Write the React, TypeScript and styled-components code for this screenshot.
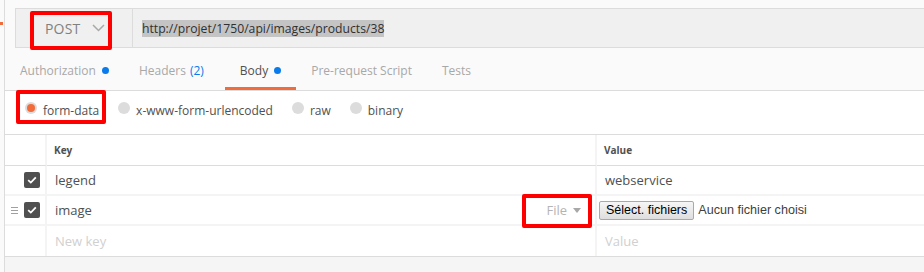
import React from "react";
import styled, { createGlobalStyle } from "styled-components";

const Global = createGlobalStyle`
  html, body { margin: 0; padding: 0; background: #fafafa; }
  body { font-family: "Open Sans", "Liberation Sans", sans-serif; }
  * { box-sizing: border-box; }
`;

const Page = styled.div`
  display: flex;
  width: 924px;
  height: 272px;
  overflow: hidden;
  background: #fafafa;
`;

const SideStrip = styled.div`
  width: 5px;
  flex: none;
  border-right: 1px solid #dcdcdc;
  background: #fafafa;
  padding-top: 22px;
`;

const SideMark = styled.div`
  width: 3px;
  height: 3px;
  background: #f26b3a;
`;

const Main = styled.div`
  flex: 1;
  display: flex;
  flex-direction: column;
  min-width: 0;
`;

const UrlArea = styled.div`
  padding: 8px 0 0 10px;
  background: #fafafa;
`;

const UrlBar = styled.div`
  display: flex;
  height: 40px;
  border: 1px solid #dcdcdc;
  border-right: none;
  background: #f0f0f0;
`;

const Method = styled.div`
  position: relative;
  width: 117px;
  flex: none;
  border-right: 1px solid #dcdcdc;
  display: flex;
  align-items: center;
  padding-left: 29px;
  gap: 11px;
  font-size: 14px;
  color: #808080;
  letter-spacing: 0.2px;
`;

const Url = styled.div`
  display: flex;
  align-items: center;
  padding-left: 9px;
  font-size: 12.2px;
  color: #303030;
`;

const Selected = styled.span`
  background: #c4c4c4;
  line-height: 17px;
`;

const Annot = styled.div<{ $l: number; $t: number; $w: number; $h: number }>`
  position: absolute;
  left: ${(p) => p.$l}px;
  top: ${(p) => p.$t}px;
  width: ${(p) => p.$w}px;
  height: ${(p) => p.$h}px;
  border: 4px solid #fe0000;
  border-radius: 2px;
  pointer-events: none;
`;

const Tabs = styled.div`
  display: flex;
  height: 43px;
  border-bottom: 1px solid #dcdcdc;
  background: #fafafa;
`;

const Tab = styled.div<{ $active?: boolean }>`
  display: flex;
  align-items: center;
  padding: 6px 15px 0;
  font-size: 12px;
  color: ${(p) => (p.$active ? "#505050" : "#a8a8a8")};
  border-bottom: 3px solid ${(p) => (p.$active ? "#f26b3a" : "transparent")};
`;

const Dot = styled.span`
  width: 7px;
  height: 7px;
  border-radius: 50%;
  background: #097bed;
  margin-left: 6px;
`;

const Count = styled.span`
  color: #097bed;
  margin-left: 4px;
  margin-right: 6px;
`;

const RadioRow = styled.div`
  display: flex;
  align-items: center;
  height: 43px;
  background: #fff;
  padding-left: 20px;
  padding-bottom: 4px;
  gap: 19px;
`;

const RadioItem = styled.label`
  position: relative;
  display: flex;
  align-items: center;
  gap: 6px;
  font-size: 12px;
  color: #505050;
`;

const RadioCircle = styled.span<{ $on?: boolean }>`
  width: 12px;
  height: 12px;
  border-radius: 50%;
  background: #dcdcdc;
  display: flex;
  align-items: center;
  justify-content: center;
  margin-top: -6px;
  &::after {
    content: "";
    width: 8px;
    height: 8px;
    border-radius: 50%;
    background: ${(p) => (p.$on ? "#f26b3a" : "transparent")};
  }
`;

const Table = styled.div`
  display: grid;
  grid-template-columns: 42px 550px 1fr;
  background: #fff;
  border-top: 1px solid #dcdcdc;
  border-bottom: 1px solid #dcdcdc;
`;

const HeadCell = styled.div<{ $right?: boolean }>`
  height: 31px;
  display: flex;
  align-items: center;
  padding-left: 7px;
  font-size: 10px;
  font-weight: 700;
  color: #505050;
  border-bottom: 1px solid #dcdcdc;
  border-right: ${(p) => (p.$right ? "none" : "2px solid #f4f4f4")};
`;

const Cell = styled.div<{ $last?: boolean; $right?: boolean }>`
  position: relative;
  height: 30px;
  display: flex;
  align-items: center;
  padding-left: 8px;
  font-size: 13px;
  color: #505050;
  border-bottom: ${(p) => (p.$last ? "none" : "2px solid #f4f4f4")};
  border-right: ${(p) => (p.$right ? "none" : "2px solid #f4f4f4")};
`;

const CheckCell = styled(Cell)`
  padding-left: 0;
  justify-content: flex-end;
  padding-right: 5px;
  gap: 6px;
`;

const Check = styled.span`
  width: 16px;
  height: 16px;
  border-radius: 2px;
  background: #505050;
  display: flex;
  align-items: center;
  justify-content: center;
`;

const Handle = styled.span`
  width: 7px;
  display: flex;
  flex-direction: column;
  gap: 2px;
  & > i { display: block; height: 1px; background: #a0a0a0; }
`;

const Placeholder = styled.span`
  color: #d0d0d0;
`;

const KeyRow = styled.div`
  flex: 1;
  display: flex;
  align-items: center;
  justify-content: space-between;
  padding-right: 14px;
`;

const TypeSelect = styled.span`
  display: flex;
  align-items: center;
  gap: 6px;
  color: #b4b4b4;
  font-size: 13px;
`;

const FileButton = styled.button`
  font-family: "Liberation Sans", Arial, sans-serif;
  font-size: 12.5px;
  color: #000;
  height: 19px;
  padding: 0 6px;
  margin-left: -6px;
  border: 1px solid #a9a9a9;
  border-radius: 2px;
  background: linear-gradient(#f6f6f6, #dedede);
`;

const FileText = styled.span`
  font-family: "Liberation Sans", Arial, sans-serif;
  font-size: 12.6px;
  color: #404040;
  margin-left: 4px;
`;

const Bottom = styled.div`
  flex: 1;
  background: #f5f5f5;
`;

const CheckIcon = () => (
  <svg width="10" height="8" viewBox="0 0 10 8">
    <path d="M1.2 4.2 L3.8 6.6 L8.8 1.4" fill="none" stroke="#fff" strokeWidth="1.8" />
  </svg>
);

export default function App() {
  return (
    <>
      <Global />
      <Page>
        <SideStrip>
          <SideMark />
        </SideStrip>
        <Main>
          <UrlArea>
            <UrlBar>
              <Method>
                POST
                <svg width="13" height="8" viewBox="0 0 13 8">
                  <path d="M1 1 L6.5 6.5 L12 1" fill="none" stroke="#a8a8a8" strokeWidth="1.5" />
                </svg>
                <Annot $l={14} $t={2} $w={82} $h={39} />
              </Method>
              <Url>
                <Selected>http://projet/1750/api/images/products/38</Selected>
              </Url>
            </UrlBar>
          </UrlArea>
          <Tabs>
            <Tab>
              Authorization<Dot />
            </Tab>
            <Tab>
              Headers<Count>(2)</Count>
            </Tab>
            <Tab $active>
              Body<Dot />
            </Tab>
            <Tab>Pre-request Script</Tab>
            <Tab>Tests</Tab>
          </Tabs>
          <RadioRow>
            <RadioItem>
              <RadioCircle $on />
              form-data
              <Annot $l={-9} $t={-12} $w={90} $h={34} />
            </RadioItem>
            <RadioItem>
              <RadioCircle />
              x-www-form-urlencoded
            </RadioItem>
            <RadioItem>
              <RadioCircle />
              raw
            </RadioItem>
            <RadioItem>
              <RadioCircle />
              binary
            </RadioItem>
          </RadioRow>
          <Table>
            <HeadCell />
            <HeadCell>Key</HeadCell>
            <HeadCell $right>Value</HeadCell>

            <CheckCell>
              <Check>
                <CheckIcon />
              </Check>
            </CheckCell>
            <Cell>legend</Cell>
            <Cell $right>webservice</Cell>

            <CheckCell>
              <Handle>
                <i />
                <i />
                <i />
              </Handle>
              <Check>
                <CheckIcon />
              </Check>
            </CheckCell>
            <Cell>
              <KeyRow>
                image
                <TypeSelect>
                  File
                  <svg width="8" height="5" viewBox="0 0 8 5">
                    <path d="M0 0 L8 0 L4 5 Z" fill="#a8a8a8" />
                  </svg>
                </TypeSelect>
              </KeyRow>
              <Annot $l={475} $t={-2} $w={70} $h={34} />
            </Cell>
            <Cell $right>
              <FileButton>Sélect. fichiers</FileButton>
              <FileText>Aucun fichier choisi</FileText>
            </Cell>

            <CheckCell $last />
            <Cell $last>
              <Placeholder>New key</Placeholder>
            </Cell>
            <Cell $last $right>
              <Placeholder>Value</Placeholder>
            </Cell>
          </Table>
          <Bottom />
        </Main>
      </Page>
    </>
  );
}
